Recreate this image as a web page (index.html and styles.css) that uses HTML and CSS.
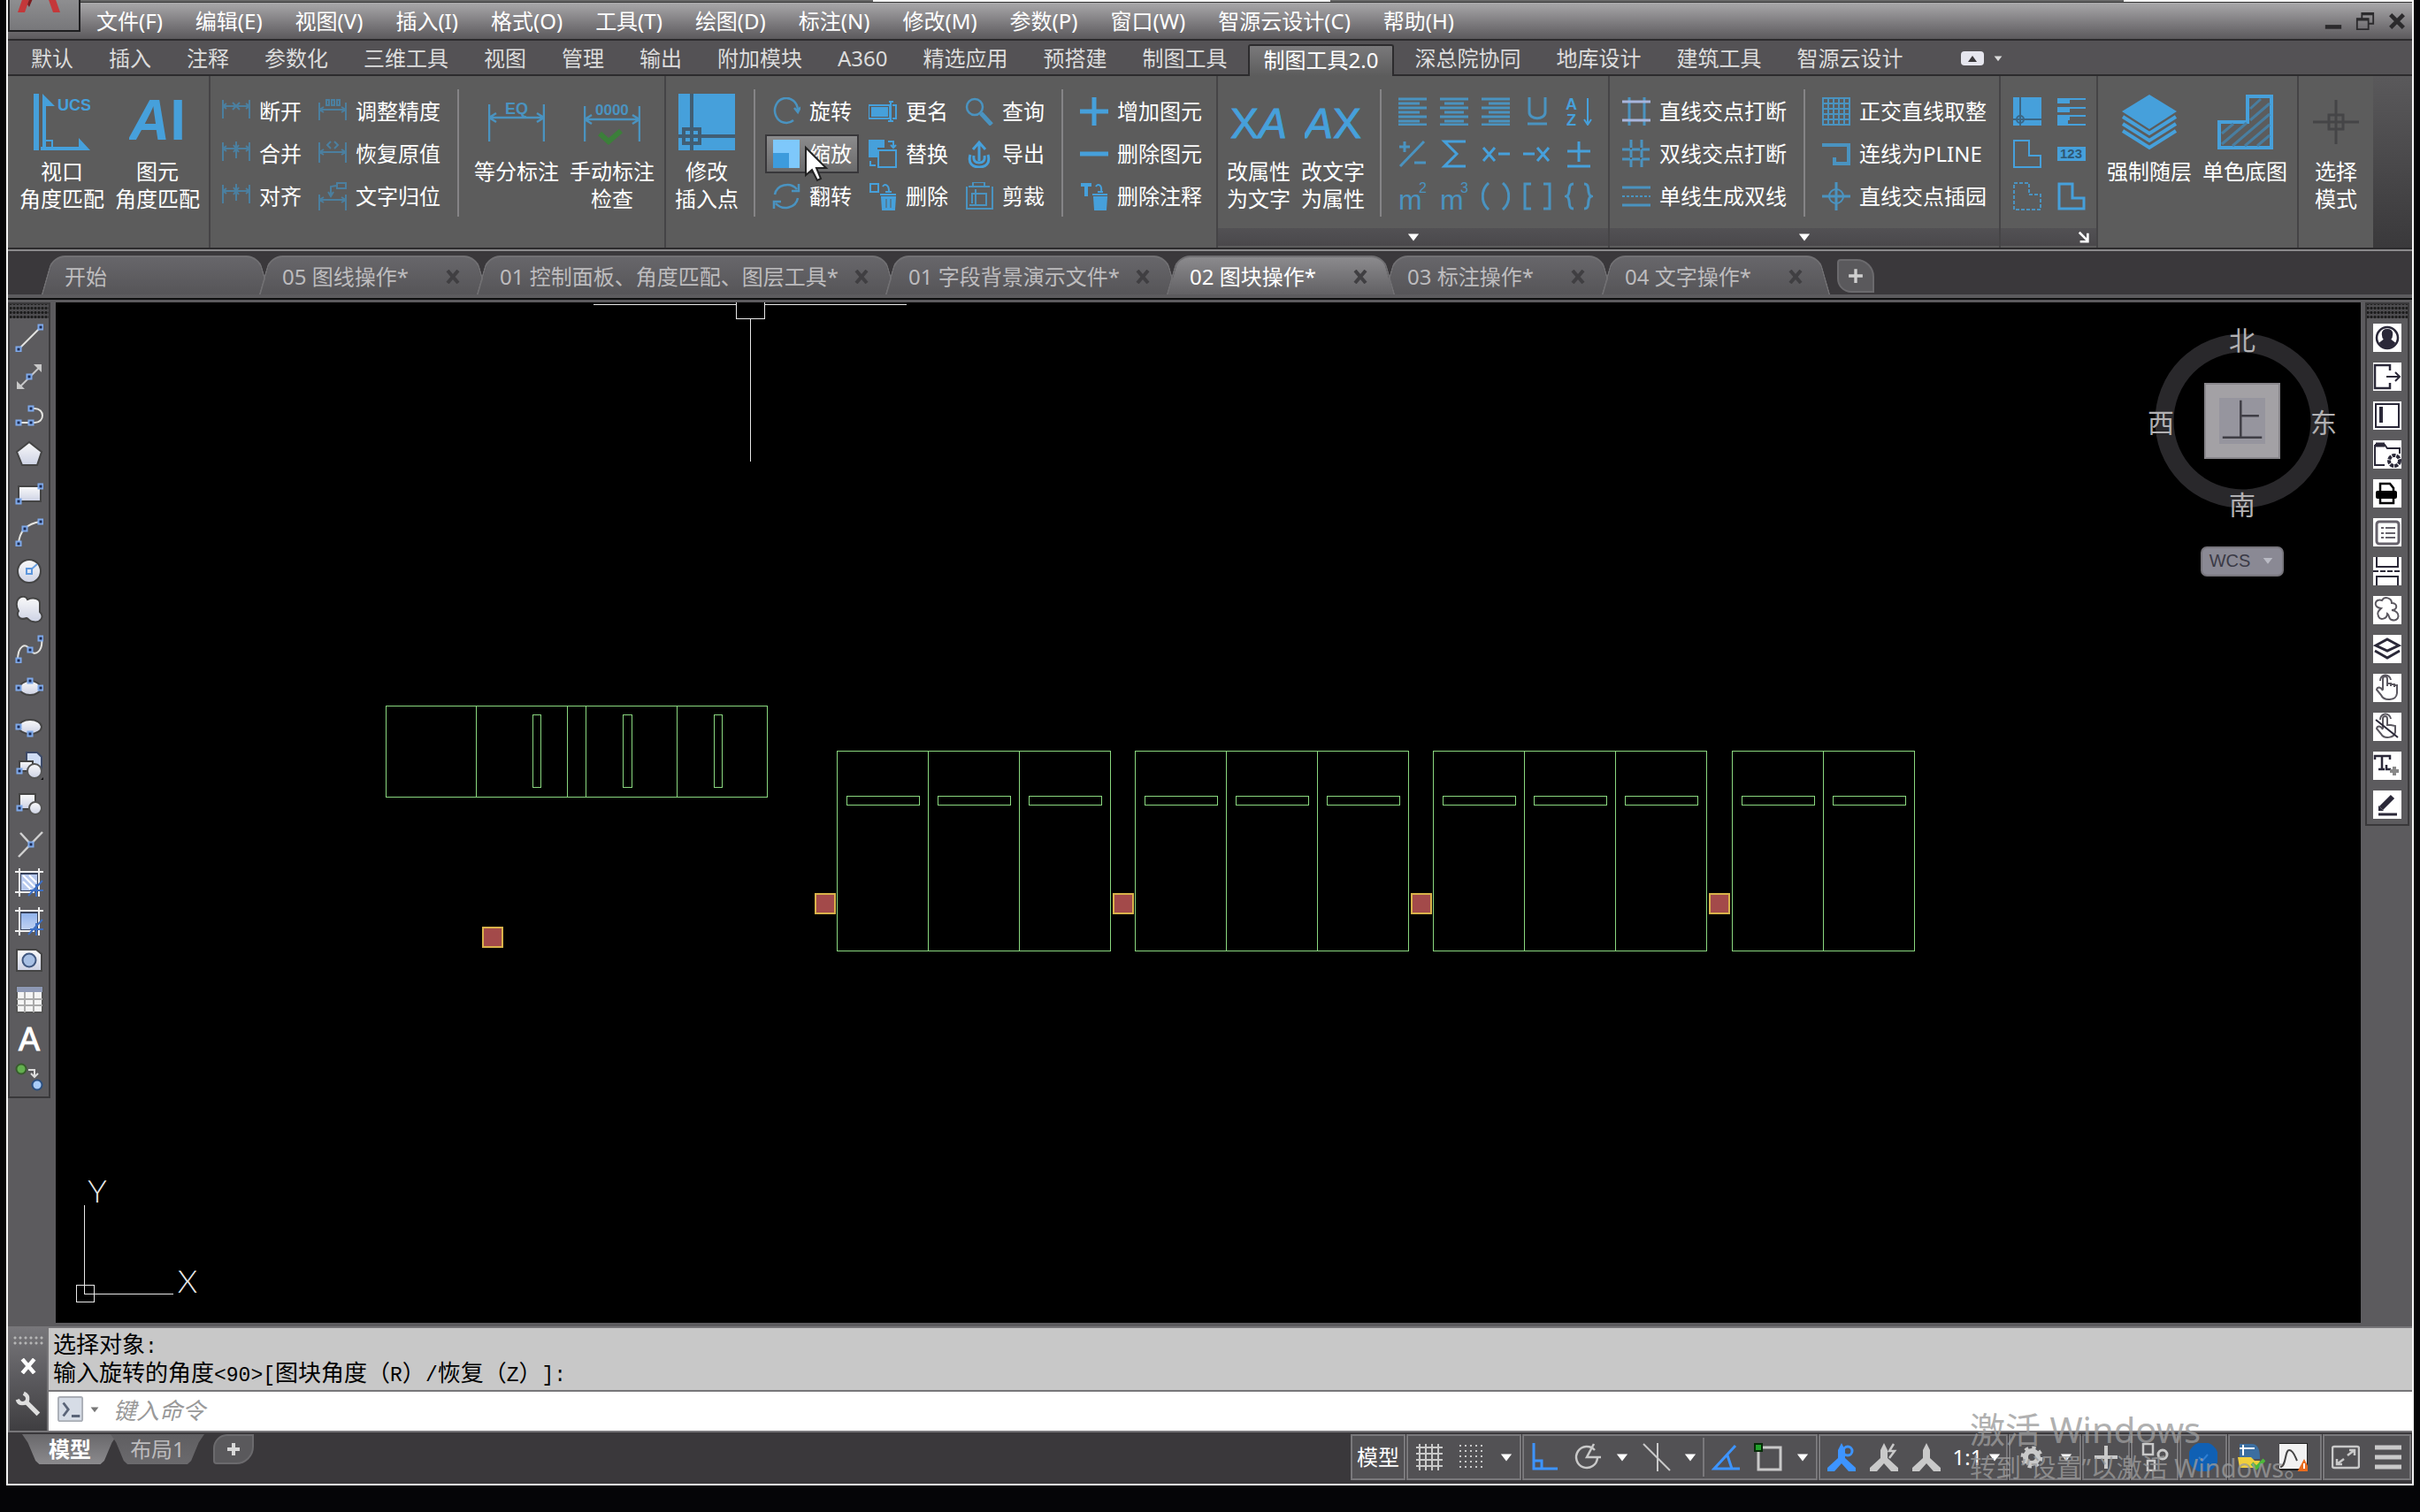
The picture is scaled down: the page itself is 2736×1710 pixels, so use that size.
FILE: index.html
```html
<!DOCTYPE html>
<html lang="zh-CN">
<head>
<meta charset="utf-8">
<title>02 图块操作</title>
<link rel="stylesheet" href="styles.css">
</head>
<body>
<svg class="defs" aria-hidden="true">
  <defs>
    <linearGradient id="gw" x1="0" y1="0" x2="0" y2="1"><stop offset="0" stop-color="#fafafa"/><stop offset="1" stop-color="#cdd2e4"/></linearGradient>
    <linearGradient id="gb" x1="0" y1="0" x2="0" y2="1"><stop offset="0" stop-color="#8fb2ec"/><stop offset="1" stop-color="#c3d3f2"/></linearGradient>
    <g id="grip"><rect x="-2.500" y="-2.500" width="5" height="5" fill="#1d2c55" stroke="#7fa9ea" stroke-width="2"/></g>
    <!-- dimension icons -->
    <symbol id="dim" viewBox="0 0 32 32"><path d="M1 3V24M31 3V24M1 10H31M5 7L1 10L5 13M27 7L31 10L27 13"/></symbol>
    <symbol id="dimx" viewBox="0 0 32 32"><use href="#dim"/><path d="M12 6L20 14M20 6L12 14"/></symbol>
    <symbol id="dimj" viewBox="0 0 32 32"><use href="#dim"/><path d="M16 2V21M13 6L16 10L13 14M19 6L16 10L19 14"/></symbol>
    <symbol id="dim0" viewBox="0 0 32 32"><path d="M1 6V26M31 6V26M1 14H31M6 11L1 14L6 17M26 11L31 14L26 17M9 3h3v6h-3zM15 3h3v6h-3zM21 3h3v6h-3z"/></symbol>
    <symbol id="dimr" viewBox="0 0 32 32"><path d="M1 3V26M31 3V26M1 14H31M6 11L1 14L6 17M26 11L31 14L26 17M14 2L10 6L14 10M18 2L22 6L18 10"/></symbol>
    <symbol id="dimt" viewBox="0 0 32 32"><path d="M1 14V32M31 14V32M1 20H31M6 17L1 20L6 23M26 17L31 20L26 23M21 1h10v6h-10zM20 4L14 5V14M11 11L14 16L17 11"/></symbol>
    <!-- block icons -->
    <symbol id="rot" viewBox="0 0 32 32"><path d="M24 26A13 14 0 1 1 29 15M25 12L29 17L32 11" stroke-width="2.500"/></symbol>
    <symbol id="scale" viewBox="0 0 32 32"><rect x="1" y="0" width="30" height="32" fill="#7ec8fb" stroke="none"/><rect x="1" y="15" width="18" height="17" fill="#3d9bdc" stroke="none"/></symbol>
    <symbol id="flip" viewBox="0 0 32 32"><path d="M3 14C5 3 20 -1 28 8M30 2V10H22M29 18C27 29 12 33 4 24M2 30V22H10" stroke-width="2.500"/></symbol>
    <symbol id="rename" viewBox="0 0 32 32"><path d="M0 9h24v15h-24zM23 5h5M25 5v22M22 27h6M27 9h4v15h-4"/><rect x="4" y="12" width="17" height="9" fill="currentColor"/></symbol>
    <symbol id="swap" viewBox="0 0 32 32"><path d="M1 1H17V8H9V19H1Z" fill="currentColor"/><path d="M11 12H31V31H11ZM22 2H28V9M2 24V29H8M25 6L28 9L31 6"/></symbol>
    <symbol id="del" viewBox="0 0 32 32"><path d="M2 2h9v9h-9zM16 5C18 1 23 3 23 10M13 14H31M19 11H26"/><path d="M15 17H30L29 31H16Z" fill="currentColor"/><path d="M20 19V29M25 19V29" stroke="#5c5c5c" stroke-width="1"/></symbol>
    <symbol id="deln" viewBox="0 0 32 32"><path d="M1 3H13M7 3V16" stroke-width="4"/><path d="M18 5C20 1 25 3 24 10M14 14H31M20 11H26"/><path d="M16 17H30L29 31H17Z" fill="currentColor"/></symbol>
    <symbol id="find" viewBox="0 0 32 32"><circle cx="11" cy="11" r="9" stroke-width="2.500"/><path d="M18 18L30 31" stroke-width="5"/></symbol>
    <symbol id="export" viewBox="0 0 32 32"><path d="M16 3V24M9 11L16 3L23 11M6 17C3 27 9 31 16 31S29 27 26 17M10 18C9 24 12 26 16 26S23 24 22 18" stroke-width="3"/></symbol>
    <symbol id="clip" viewBox="0 0 32 32"><path d="M4 5H28M2 5V30H31V5M9 5V0H22V5M8 24V13H24V26H5M12 8V26"/></symbol>
    <symbol id="plus" viewBox="0 0 32 32"><path d="M16 0V32M0 16H32" stroke-width="5"/></symbol>
    <symbol id="minus" viewBox="0 0 32 32"><path d="M0 16H32" stroke-width="5"/></symbol>
    <!-- text tools -->
    <symbol id="al" viewBox="0 0 32 32"><path d="M0 2H32M0 7H24M0 12H32M0 17H24M0 22H32M0 27H24M0 31H32" stroke-width="3"/></symbol>
    <symbol id="ac" viewBox="0 0 32 32"><path d="M0 2H32M5 7H27M0 12H32M5 17H27M0 22H32M5 27H27M0 31H32" stroke-width="3"/></symbol>
    <symbol id="ar" viewBox="0 0 32 32"><path d="M0 2H32M8 7H32M0 12H32M8 17H32M0 22H32M8 27H32M0 31H32" stroke-width="3"/></symbol>
    <symbol id="und" viewBox="0 0 32 32"><path d="M7 0V17C7 26 25 26 25 17V0M5 30H27" stroke-width="3"/></symbol>
    <symbol id="az" viewBox="0 0 32 32"><path d="M26 1V30M22 25L26 31L30 25"/><text x="1" y="14" class="t tb t18">A</text><text x="2" y="32" class="t tb t18">Z</text></symbol>
    <symbol id="pm" viewBox="0 0 32 32"><path d="M2 30L29 2M1 8H13M7 2V14M18 26H31" stroke-width="3"/></symbol>
    <symbol id="sum" viewBox="0 0 32 32"><path d="M29 2H5L19 16L5 30H29" stroke-width="3"/></symbol>
    <symbol id="xm" viewBox="0 0 32 32"><path d="M2 9L15 24M15 9L2 24M19 16H32" stroke-width="3"/></symbol>
    <symbol id="mx" viewBox="0 0 32 32"><path d="M16 9L29 24M29 9L16 24M0 16H13" stroke-width="3"/></symbol>
    <symbol id="pmm" viewBox="0 0 32 32"><path d="M16 2V25M3 13H29M3 30H29" stroke-width="3"/></symbol>
    <symbol id="m2" viewBox="0 0 32 32"><text x="0" y="31" class="t t26">m</text><text x="23" y="12" class="t t16">2</text></symbol>
    <symbol id="m3" viewBox="0 0 32 32"><text x="0" y="31" class="t t26">m</text><text x="23" y="12" class="t t16">3</text></symbol>
    <symbol id="p1" viewBox="0 0 32 32"><path d="M8 1C-1 9 -1 23 8 31M24 1C33 9 33 23 24 31" stroke-width="3"/></symbol>
    <symbol id="p2" viewBox="0 0 32 32"><path d="M9 2H2V30H9M23 2H30V30H23" stroke-width="3"/></symbol>
    <symbol id="p3" viewBox="0 0 32 32"><path d="M10 2C2 2 8 14 2 16C8 18 2 30 10 30M22 2C30 2 24 14 30 16C24 18 30 30 22 30" stroke-width="3"/></symbol>
    <!-- line tools -->
    <symbol id="c1" viewBox="0 0 32 32"><path d="M8 0V32M25 0V32" stroke-width="3"/><path d="M0 5H32M0 26H32" stroke="#a9b6dd" stroke-width="3"/></symbol>
    <symbol id="c2" viewBox="0 0 32 32"><path d="M10 0V32M22 0V32M0 11H32M0 22H32" stroke-dasharray="9 2" stroke-width="3"/></symbol>
    <symbol id="c3" viewBox="0 0 32 32"><path d="M0 6H32M0 26H32" stroke-width="3"/><path d="M0 16H32" stroke-dasharray="3 2"/></symbol>
    <symbol id="c4" viewBox="0 0 32 32"><path d="M1 1H31V31H1ZM7 1V31M13 1V31M19 1V31M25 1V31M1 7H31M1 13H31M1 19H31M1 25H31"/></symbol>
    <symbol id="c5" viewBox="0 0 32 32"><path d="M0 6H30V27H14V20" stroke-width="4"/></symbol>
    <symbol id="c6" viewBox="0 0 32 32"><circle cx="16" cy="16" r="8"/><path d="M16 0V32M0 16H32" stroke-width="3"/></symbol>
    <symbol id="d1" viewBox="0 0 32 32"><rect width="32" height="32" fill="#46a0db" stroke="none"/><path d="M8 0V32M0 25H32" stroke="#3c6684"/><circle cx="8" cy="25" r="4" stroke="#3c6684"/></symbol>
    <symbol id="d2" viewBox="0 0 32 32"><path d="M0 2H32M0 12H32M0 21H32M0 31H32"/><path d="M0 5H14M0 15H14M0 24H14M12 28H0" stroke-width="4"/></symbol>
    <symbol id="d3" viewBox="0 0 32 32"><path d="M1 1H18V18H31V31H1Z"/></symbol>
    <symbol id="d4" viewBox="0 0 32 32"><rect x="0" y="8" width="32" height="16" fill="#46a0db" stroke="none"/><text x="3" y="21" class="t tb t14 dark">123</text></symbol>
    <symbol id="d5" viewBox="0 0 32 32"><path d="M1 1H18V14H31V31H1Z" stroke-dasharray="4 2"/></symbol>
    <symbol id="d6" viewBox="0 0 32 32"><path d="M2 2H17V18H30V30H2Z" stroke-width="3"/></symbol>
    <!-- large ribbon icons -->
    <symbol id="ucs" viewBox="0 0 64 64"><path d="M3 0V64" stroke-width="6"/><path d="M12 64V8M8 62H60" stroke-width="4"/><path d="M10 0L24 14H10ZM51 50L64 64H51Z" fill="currentColor" stroke="none"/><path d="M14 53h7v8"/><text x="27" y="19" class="t tb t20">UCS</text></symbol>
    <symbol id="ai" viewBox="0 0 64 64"><text x="0" y="52" class="t tb t62"><tspan font-style="italic">A</tspan>I</text></symbol>
    <symbol id="eq" viewBox="0 0 64 64"><path d="M1 12V54M63 12V54M1 27H63M9 22L1 27L9 32M55 22L63 27L55 32" stroke-width="2.500"/><text x="19" y="23" class="t tb t18">EQ</text></symbol>
    <symbol id="chk" viewBox="0 0 64 64"><path d="M1 14V54M63 14V54M1 29H63M9 24L1 29L9 34M55 24L63 29L55 34" stroke-width="2.500"/><text x="13" y="24" class="t tb t17">0000</text><path d="M18 45L28 54L42 42" stroke="#3c7f3a" stroke-width="6"/></symbol>
    <symbol id="ins" viewBox="0 0 64 64"><rect width="64" height="64" fill="#46a0db" stroke="none"/><path d="M15 0V64M0 48H64" stroke="#415e74" stroke-width="4"/><rect x="6" y="40" width="18" height="16" stroke="#415e74" stroke-width="4"/></symbol>
    <symbol id="xa" viewBox="0 0 64 64"><text x="0" y="50" class="t t48">X<tspan font-style="italic">A</tspan></text></symbol>
    <symbol id="ax" viewBox="0 0 64 64"><text x="0" y="50" class="t t48"><tspan font-style="italic">A</tspan>X</text></symbol>
    <symbol id="layer" viewBox="0 0 64 64"><path d="M32 1L63 20L32 40L1 20Z" fill="#46a0db" stroke="none"/><path d="M2 26L32 45L62 26M2 34L32 53L62 34M2 42L32 61L62 42" stroke-width="4"/></symbol>
    <symbol id="mono" viewBox="0 0 64 64"><path d="M35 3H62V61H3V32H35Z" stroke-width="4"/><path d="M6 45L19 34M6 57L34 33M18 59L60 23M32 59L60 35M46 59L60 47M38 30L60 11M38 17L50 6" stroke="#497ea0" stroke-width="3"/></symbol>
    <symbol id="sel" viewBox="0 0 64 64"><path d="M32 7V26M32 38V57M6 32H25M39 32H58M24 24H40V40H24ZM32 24V40M24 32H40" stroke="#454547" stroke-width="3"/></symbol>
    <!-- drawing toolbar -->
    <symbol id="l1" viewBox="0 0 32 32"><path d="M4 29L29 4" stroke="#e4e4e0"/><use href="#grip" x="4" y="29"/><use href="#grip" x="29" y="4"/></symbol>
    <symbol id="l2" viewBox="0 0 32 32"><path d="M6 27L27 6" stroke="#c8c8c8"/><path d="M21 2H30V11ZM2 21V30H11Z" fill="#c8c8c8" stroke="none"/><use href="#grip" x="16" y="16"/></symbol>
    <symbol id="l3" viewBox="0 0 32 32"><path d="M4 24H22C34 24 34 8 22 8H17" stroke="#e4e4e0"/><use href="#grip" x="4" y="24"/><use href="#grip" x="18" y="24"/><use href="#grip" x="18" y="8"/></symbol>
    <symbol id="l4" viewBox="0 0 32 32"><path d="M16 2L30 13L25 28H8L2 13Z" fill="url(#gw)" stroke="#444"/></symbol>
    <symbol id="l5" viewBox="0 0 32 32"><rect x="4" y="8" width="25" height="17" fill="url(#gw)" stroke="#444"/><use href="#grip" x="4" y="25"/><use href="#grip" x="29" y="8"/></symbol>
    <symbol id="l6" viewBox="0 0 32 32"><path d="M4 29C5 14 14 6 29 4" stroke="#e4e4e0"/><use href="#grip" x="4" y="29"/><use href="#grip" x="11" y="12"/><use href="#grip" x="29" y="4"/></symbol>
    <symbol id="l7" viewBox="0 0 32 32"><circle cx="16" cy="16" r="13" fill="url(#gw)" stroke="#444"/><path d="M16 16L25 8" stroke="#6aa0e0"/><rect x="13" y="13" width="6" height="6" fill="#dfe6f5" stroke="#5d97dd"/></symbol>
    <symbol id="l8" viewBox="0 0 32 32"><path d="M4 3C8 -1 13 1 14 4C21 1 28 3 28 8V18C34 24 28 31 20 29C16 29 16 26 13 25C5 28 1 22 4 17C1 12 1 6 4 3Z" fill="url(#gw)" stroke="#444"/></symbol>
    <symbol id="l9" viewBox="0 0 32 32"><path d="M3 29C3 12 12 8 17 17C22 26 32 18 30 4" stroke="#e4e4e0"/><use href="#grip" x="4" y="29"/><use href="#grip" x="17" y="17"/><use href="#grip" x="29" y="4"/></symbol>
    <symbol id="l10" viewBox="0 0 32 32"><ellipse cx="17" cy="16" rx="12" ry="8" fill="url(#gw)" stroke="#444"/><use href="#grip" x="4" y="16"/><use href="#grip" x="17" y="8"/><use href="#grip" x="29" y="16"/></symbol>
    <symbol id="l11" viewBox="0 0 32 32"><ellipse cx="17" cy="16" rx="13" ry="8" fill="url(#gw)" stroke="#444"/><use href="#grip" x="4" y="16"/><use href="#grip" x="17" y="24"/></symbol>
    <symbol id="l12" viewBox="0 0 32 32"><path d="M13 1H25L30 6V20H13Z" fill="#cfdcf5" stroke="#3d4a68"/><rect x="5" y="11" width="15" height="11" fill="url(#gw)" stroke="#444"/><circle cx="22" cy="22" r="8" fill="url(#gw)" stroke="#555"/><use href="#grip" x="5" y="22"/><path d="M33 28V32H29Z" fill="#111" stroke="none"/></symbol>
    <symbol id="l13" viewBox="0 0 32 32"><rect x="5" y="4" width="18" height="17" fill="url(#gw)" stroke="#444"/><circle cx="23" cy="20" r="7" fill="url(#gw)" stroke="#555"/><use href="#grip" x="5" y="20"/></symbol>
    <symbol id="l14" viewBox="0 0 32 32"><path d="M4 31L31 3M6 4L17 16" stroke="#d0d0d0" stroke-width="2.500"/><use href="#grip" x="18" y="17"/></symbol>
    <symbol id="l15" viewBox="0 0 32 32"><rect x="6" y="6" width="20" height="20" fill="#b7c9ee" stroke="#38435c"/><path d="M9 8L24 23M16 8L24 16M9 15L19 25" stroke="#fff"/><path d="M5 0V32M27 0V32M0 4H32M0 27H22" stroke="#f0f0f0"/><path d="M24 18V32M17 25H32M15 31L31 14" stroke="#3d6fc4"/></symbol>
    <symbol id="l16" viewBox="0 0 32 32"><rect x="6" y="6" width="20" height="20" fill="url(#gb)" stroke="#38435c"/><path d="M5 0V32M27 0V32M0 4H32M0 27H22" stroke="#f0f0f0"/><path d="M24 18V32M17 25H32M15 31L31 14" stroke="#3d6fc4"/></symbol>
    <symbol id="l17" viewBox="0 0 32 32"><path d="M2 4H24L30 9V28H2Z" fill="url(#gw)" stroke="#444"/><circle cx="16" cy="16" r="7.500" fill="#a8c0e4" stroke="#415880"/></symbol>
    <symbol id="l18" viewBox="0 0 32 32"><rect x="2" y="2" width="29" height="29" fill="#f4f4f4" stroke="#555"/><rect x="2" y="2" width="29" height="6" fill="#8d98b4" stroke="none"/><path d="M11 8V31M21 8V31M2 16H31M2 23H31" stroke="#aaa"/></symbol>
    <symbol id="l19" viewBox="0 0 32 32"><text x="4" y="30" class="t t34 white">A</text></symbol>
    <symbol id="l20" viewBox="0 0 32 32"><circle cx="7" cy="7" r="5.500" fill="#63b04f" stroke="#375c2c"/><circle cx="25" cy="25" r="5.500" fill="#a9cdfa" stroke="#2b4f80"/><path d="M15 8H22V15M18 12L22 16L26 12" stroke="#ddd"/></symbol>
    <!-- utility toolbar -->
    <symbol id="r1" viewBox="0 0 32 32"><ellipse cx="16" cy="16" rx="12" ry="12" stroke-width="2.500"/><path d="M16 7C24 7 21 16 19 18L24 22C20 28 12 28 8 22L13 18C11 16 8 7 16 7Z" fill="currentColor"/></symbol>
    <symbol id="r2" viewBox="0 0 32 32"><path d="M19 9V3H2V29H19V23" stroke-width="2.500"/><path d="M15 16H30M25 11L30 16L25 21"/></symbol>
    <symbol id="r3" viewBox="0 0 32 32"><rect x="3" y="3" width="26" height="26"/><path d="M9 6V24" stroke-width="4"/></symbol>
    <symbol id="r4" viewBox="0 0 32 32"><path d="M2 5H13L16 9H30V15M2 5V28H13"/><path d="M3 5H13" stroke-width="5"/><circle cx="24" cy="23" r="6" stroke-width="4" stroke-dasharray="4 1"/></symbol>
    <symbol id="r5" viewBox="0 0 32 32"><path d="M8 14V5H19L23 10V14M8 22V27H23V22" stroke="#000" stroke-width="2.500"/><rect x="3" y="13" width="24" height="9" rx="2" fill="#000" stroke="none"/></symbol>
    <symbol id="r6" viewBox="0 0 32 32"><rect x="4" y="4" width="25" height="25" rx="3" stroke="#67626c" stroke-width="3"/><path d="M9 11H12M14 11H25M9 17H12M14 17H25M9 22H12M14 22H25" stroke="#67626c"/></symbol>
    <symbol id="r7" viewBox="0 0 32 32"><path d="M4 0V11H28V0M4 32V22H28V32"/><path d="M0 16H32" stroke-dasharray="6 2"/></symbol>
    <symbol id="r8" viewBox="0 0 32 32"><path d="M9 14C-1 13 2 2 10 5C13 0 21 2 21 8C28 8 28 16 21 16C32 17 30 30 21 27C17 26 19 22 16 20C16 26 8 28 6 23C4 19 6 17 9 14Z" stroke="#5b5860"/></symbol>
    <symbol id="r9" viewBox="0 0 32 32"><path d="M16 5L29 12L16 18L3 12ZM2 18L16 26L30 18" stroke-width="3"/></symbol>
    <symbol id="r10" viewBox="0 0 32 32"><path d="M11 18V6C11 2 16 2 16 6V14M16 11H20V14M20 12H24V15M24 13H27V22C26 31 12 31 9 24L4 18C5 14 9 15 11 19M8 8A6 6 0 1 1 20 7" stroke="#5b5860"/></symbol>
    <symbol id="r11" viewBox="0 0 32 32"><path d="M11 18V7C11 3 16 3 16 7V14H20L25 15V22C24 29 12 30 9 24L4 18C5 14 9 15 11 19M8 8A6 6 0 1 1 20 7" stroke="#5b5860"/><path d="M3 8L28 28"/></symbol>
    <symbol id="r12" viewBox="0 0 32 32"><path d="M2 9V5H19V9M10 5V20M6 20H13M15 15V20H20" stroke-width="2.500"/><path d="M24 17V27M19 22H29" stroke="#888" stroke-width="4"/></symbol>
    <symbol id="r13" viewBox="0 0 32 32"><path d="M6 27H27" stroke-width="3"/><path d="M9 20L22 7" stroke-width="6"/><path d="M6 17L12 23L6 23Z" fill="currentColor" stroke="none"/></symbol>
    <!-- status bar -->
    <symbol id="s1" viewBox="0 0 32 32"><path d="M5 1V31M12 1V31M19 1V31M26 1V31M1 5H31M1 12H31M1 19H31M1 26H31"/></symbol>
    <symbol id="s2" viewBox="0 0 32 32"><path d="M2 3H31M2 9H31M2 15H31M2 21H31M2 27H31" stroke-dasharray="2 4"/></symbol>
    <symbol id="s3" viewBox="0 0 32 32"><path d="M3 0V29H30M3 20H12V29" stroke="#3d94ff" stroke-width="3"/></symbol>
    <symbol id="s4" viewBox="0 0 32 32"><path d="M24 8A12 12 0 1 0 27 17M31 16H15L23 1" stroke-width="2.500"/></symbol>
    <symbol id="s5" viewBox="0 0 32 32"><path d="M1 1L31 31M17 0V32" stroke-width="2"/></symbol>
    <symbol id="s6" viewBox="0 0 32 32"><path d="M27 3L3 29H32M18 14L23 29" stroke="#3d94ff" stroke-width="3"/></symbol>
    <symbol id="s7" viewBox="0 0 32 32"><rect x="5" y="5" width="25" height="25" stroke-width="3"/><rect x="1" y="1" width="8" height="8" fill="#22a32c" stroke="#062c08"/></symbol>
    <symbol id="s8" viewBox="0 0 32 32"><path d="M16 0L20 8V17L32 28V32H24L16 23L8 32H0V28L12 17V8Z" fill="currentColor" stroke="none"/></symbol>
    <symbol id="s8b" viewBox="0 0 32 32"><use href="#s8" color="#3d94ff"/><circle cx="23" cy="9" r="5" stroke="#3d94ff" stroke-width="3"/></symbol>
    <symbol id="s8c" viewBox="0 0 32 32"><use href="#s8"/><path d="M27 1L22 9H28L22 17" stroke-width="2.500"/></symbol>
    <symbol id="gear" viewBox="0 0 32 32"><circle cx="16" cy="16" r="7" stroke-width="6"/><circle cx="16" cy="16" r="10" stroke-width="5" stroke-dasharray="4 3.854"/></symbol>
    <symbol id="splus" viewBox="0 0 32 32"><path d="M16 3V29M3 16H29" stroke-width="4"/></symbol>
    <symbol id="sobj" viewBox="0 0 32 32"><path d="M3 1H14V13H3ZM8 20V31H16V20Z" stroke-width="2.500"/><circle cx="25" cy="13" r="5" stroke-width="3"/></symbol>
    <symbol id="sok" viewBox="0 0 32 32"><circle cx="16" cy="16" r="17" fill="#1060b4" stroke="none"/><path d="M11 16L15 20L21 13" stroke="#2f7fd4"/></symbol>
    <symbol id="spr" viewBox="0 0 32 32"><path d="M3 1H17C23 1 26 6 26 18H3Z" fill="#3c6ea0" stroke="none"/><path d="M1 16H16L20 20H26L24 28H3Z" fill="#f0cf3d" stroke="none"/><path d="M3 6H20M7 2V14" stroke="#fff"/><path d="M17 23L22 28L31 19" stroke="#4cb83a" stroke-width="4"/></symbol>
    <symbol id="sgr" viewBox="0 0 32 32"><rect x="-2" y="0" width="34" height="30" fill="#f2f2f2" stroke="#222"/><path d="M1 27C8 27 6 8 11 8S18 16 20 20" stroke="#444"/><path d="M28 18L36 33H20Z" fill="#e86b1e" stroke="none"/><path d="M28 23V29" stroke="#fff"/></symbol>
    <symbol id="sfull" viewBox="0 0 32 32"><rect x="1" y="4" width="30" height="24" rx="2" stroke-width="2.500"/><path d="M18 14L26 8M20 8H26V14M14 18L6 24M6 18V24H12" stroke-width="2.500"/></symbol>
    <symbol id="smenu" viewBox="0 0 32 32"><path d="M1 5H31M1 16H31M1 27H31" stroke-width="5"/></symbol>
    <symbol id="down" viewBox="0 0 16 16"><path d="M1 4H15L8 13Z" fill="currentColor" stroke="none"/></symbol>
    <symbol id="x" viewBox="0 0 16 16"><path d="M2 1L14 15M14 1L2 15" stroke-width="4"/></symbol>
  </defs>
</svg>

<div class="window">
  <div class="edge"></div>
  <header class="menubar">
    <button class="logo" aria-label="应用程序"><svg viewBox="0 0 48 14"><path d="M0 14L7 -6H15L8 14ZM33 -6H41L48 14H40Z" fill="#c4383a"/><path d="M15 -6L11 5L13 8L19 -6Z" fill="#7d1c1f"/></svg></button>
    <nav class="menus">
      <button>文件(F)</button><button>编辑(E)</button><button>视图(V)</button><button>插入(I)</button><button>格式(O)</button><button>工具(T)</button><button>绘图(D)</button><button>标注(N)</button><button>修改(M)</button><button>参数(P)</button><button>窗口(W)</button><button>智源云设计(C)</button><button>帮助(H)</button>
    </nav>
    <div class="wincontrols">
      <button aria-label="最小化"><svg viewBox="0 0 24 24"><path d="M2 19H22" stroke-width="5"/></svg></button>
      <button aria-label="还原"><svg viewBox="0 0 24 24"><path d="M8 8V2H22V15H16M2 9H16V22H2Z" stroke-width="2"/><path d="M8 3H22M2 10H16" stroke-width="3"/></svg></button>
      <button aria-label="关闭"><svg viewBox="0 0 24 24"><path d="M4 4L20 20M20 4L4 20" stroke-width="5"/></svg></button>
    </div>
  </header>

  <nav class="rtabs">
    <button>默认</button><button>插入</button><button>注释</button><button>参数化</button><button>三维工具</button><button>视图</button><button>管理</button><button>输出</button><button>附加模块</button><button>A360</button><button>精选应用</button><button>预搭建</button><button>制图工具</button><button class="on">制图工具2.0</button><button>深总院协同</button><button>地库设计</button><button>建筑工具</button><button>智源云设计</button>
    <button class="collapse" aria-label="最小化功能区"><svg class="pill" viewBox="0 0 26 16"><rect width="26" height="16" rx="4" fill="#e6e6ee"/><path d="M8 12L13 5L18 12Z" fill="#3a383b"/></svg><svg class="tri"><use href="#down"/></svg></button>
  </nav>

  <section class="ribbon">
    <div class="panel pa"><div class="tools">
      <button class="big"><svg><use href="#ucs"/></svg><span>视口<br>角度匹配</span></button>
      <button class="big"><svg><use href="#ai"/></svg><span>图元<br>角度匹配</span></button>
    </div></div>
    <div class="panel pb"><div class="tools">
      <div class="stack">
        <button><svg class="dim"><use href="#dimx"/></svg>断开</button>
        <button><svg class="dim"><use href="#dimj"/></svg>合并</button>
        <button><svg class="dim"><use href="#dimj"/></svg>对齐</button>
      </div>
      <div class="stack">
        <button><svg class="dim"><use href="#dim0"/></svg>调整精度</button>
        <button><svg class="dim"><use href="#dimr"/></svg>恢复原值</button>
        <button><svg class="dim"><use href="#dimt"/></svg>文字归位</button>
      </div>
      <i class="sep"></i>
      <button class="big"><svg class="mid"><use href="#eq"/></svg><span>等分标注</span></button>
      <button class="big"><svg class="mid"><use href="#chk"/></svg><span>手动标注<br>检查</span></button>
    </div></div>
    <div class="panel pc"><div class="tools">
      <button class="big narrow"><svg><use href="#ins"/></svg><span>修改<br>插入点</span></button>
      <i class="sep"></i>
      <div class="stack">
        <button><svg class="mid"><use href="#rot"/></svg>旋转</button>
        <button class="hot"><svg><use href="#scale"/></svg>缩放</button>
        <button><svg class="mid"><use href="#flip"/></svg>翻转</button>
      </div>
      <div class="stack">
        <button><svg><use href="#rename"/></svg>更名</button>
        <button><svg><use href="#swap"/></svg>替换</button>
        <button><svg><use href="#del"/></svg>删除</button>
      </div>
      <div class="stack">
        <button><svg class="mid"><use href="#find"/></svg>查询</button>
        <button><svg><use href="#export"/></svg>导出</button>
        <button><svg class="mid"><use href="#clip"/></svg>剪裁</button>
      </div>
      <i class="sep"></i>
      <div class="stack">
        <button><svg><use href="#plus"/></svg>增加图元</button>
        <button><svg><use href="#minus"/></svg>删除图元</button>
        <button><svg><use href="#deln"/></svg>删除注释</button>
      </div>
    </div></div>
    <div class="panel pd"><div class="tools">
      <button class="big narrow"><svg><use href="#xa"/></svg><span>改属性<br>为文字</span></button>
      <button class="big narrow"><svg><use href="#ax"/></svg><span>改文字<br>为属性</span></button>
      <i class="sep"></i>
      <div class="icons five">
        <button aria-label="左对齐"><svg class="mid"><use href="#al"/></svg></button><button aria-label="居中"><svg class="mid"><use href="#ac"/></svg></button><button aria-label="右对齐"><svg class="mid"><use href="#ar"/></svg></button><button aria-label="下划线"><svg class="mid"><use href="#und"/></svg></button><button aria-label="排序"><svg><use href="#az"/></svg></button>
        <button aria-label="加减"><svg class="mid"><use href="#pm"/></svg></button><button aria-label="求和"><svg><use href="#sum"/></svg></button><button aria-label="后缀"><svg><use href="#xm"/></svg></button><button aria-label="前缀"><svg><use href="#mx"/></svg></button><button aria-label="正负"><svg><use href="#pmm"/></svg></button>
        <button aria-label="平方米"><svg class="mid"><use href="#m2"/></svg></button><button aria-label="立方米"><svg class="mid"><use href="#m3"/></svg></button><button aria-label="圆括号"><svg class="mid"><use href="#p1"/></svg></button><button aria-label="方括号"><svg class="mid"><use href="#p2"/></svg></button><button aria-label="花括号"><svg class="mid"><use href="#p3"/></svg></button>
      </div>
    </div><button class="foot" aria-label="展开"><svg><use href="#down"/></svg></button></div>
    <div class="panel pe"><div class="tools">
      <div class="stack">
        <button><svg class="mid"><use href="#c1"/></svg>直线交点打断</button>
        <button><svg class="mid"><use href="#c2"/></svg>双线交点打断</button>
        <button><svg class="mid"><use href="#c3"/></svg>单线生成双线</button>
      </div>
      <i class="sep"></i>
      <div class="stack">
        <button><svg class="mid"><use href="#c4"/></svg>正交直线取整</button>
        <button><svg class="mid"><use href="#c5"/></svg>连线为PLINE</button>
        <button><svg class="mid"><use href="#c6"/></svg>直线交点插园</button>
      </div>
    </div><button class="foot" aria-label="展开"><svg><use href="#down"/></svg></button></div>
    <div class="panel pf"><div class="tools">
      <div class="icons two">
        <button aria-label="图块填充"><svg><use href="#d1"/></svg></button><button aria-label="图层表"><svg><use href="#d2"/></svg></button>
        <button aria-label="轮廓"><svg><use href="#d3"/></svg></button><button aria-label="编号"><svg><use href="#d4"/></svg></button>
        <button aria-label="虚线轮廓"><svg class="mid"><use href="#d5"/></svg></button><button aria-label="粗轮廓"><svg><use href="#d6"/></svg></button>
      </div>
    </div><button class="foot end" aria-label="设置"><svg viewBox="0 0 16 16"><path d="M2 2L13 13M13 3V14H3" stroke-width="3"/></svg></button></div>
    <div class="panel pg"><div class="tools">
      <button class="big"><svg><use href="#layer"/></svg><span>强制随层</span></button>
      <button class="big"><svg><use href="#mono"/></svg><span>单色底图</span></button>
    </div></div>
    <div class="panel ph"><div class="tools">
      <button class="big narrow"><svg><use href="#sel"/></svg><span>选择<br>模式</span></button>
    </div></div>
    <div class="rest"></div>
  </section>

  <nav class="files">
    <div class="ftab"><a href="#">开始</a></div>
    <div class="ftab"><a href="#">05 图线操作*</a><button aria-label="关闭"><svg><use href="#x"/></svg></button></div>
    <div class="ftab long"><a href="#">01 控制面板、角度匹配、图层工具*</a><button aria-label="关闭"><svg><use href="#x"/></svg></button></div>
    <div class="ftab wide"><a href="#">01 字段背景演示文件*</a><button aria-label="关闭"><svg><use href="#x"/></svg></button></div>
    <div class="ftab on"><a href="#">02 图块操作*</a><button aria-label="关闭"><svg><use href="#x"/></svg></button></div>
    <div class="ftab"><a href="#">03 标注操作*</a><button aria-label="关闭"><svg><use href="#x"/></svg></button></div>
    <div class="ftab"><a href="#">04 文字操作*</a><button aria-label="关闭"><svg><use href="#x"/></svg></button></div>
    <button class="add" aria-label="新建"><svg viewBox="0 0 16 16"><path d="M8 1V15M1 8H15" stroke-width="3"/></svg></button>
  </nav>

  <main class="work">
    <aside class="bar left">
      <i class="dots"></i>
      <button aria-label="直线"><svg><use href="#l1"/></svg></button><button aria-label="构造线"><svg><use href="#l2"/></svg></button><button aria-label="多段线"><svg><use href="#l3"/></svg></button><button aria-label="多边形"><svg><use href="#l4"/></svg></button><button aria-label="矩形"><svg><use href="#l5"/></svg></button><button aria-label="圆弧"><svg><use href="#l6"/></svg></button><button aria-label="圆"><svg><use href="#l7"/></svg></button><button aria-label="修订云线"><svg><use href="#l8"/></svg></button><button aria-label="样条曲线"><svg><use href="#l9"/></svg></button><button aria-label="椭圆"><svg><use href="#l10"/></svg></button><button aria-label="椭圆弧"><svg><use href="#l11"/></svg></button><button aria-label="插入块"><svg><use href="#l12"/></svg></button><button aria-label="创建块"><svg><use href="#l13"/></svg></button><button aria-label="点"><svg><use href="#l14"/></svg></button><button aria-label="图案填充"><svg><use href="#l15"/></svg></button><button aria-label="渐变色"><svg><use href="#l16"/></svg></button><button aria-label="面域"><svg><use href="#l17"/></svg></button><button aria-label="表格"><svg><use href="#l18"/></svg></button><button aria-label="多行文字"><svg><use href="#l19"/></svg></button><button aria-label="添加选定对象"><svg><use href="#l20"/></svg></button>
    </aside>
    <div class="canvas">
      <svg class="drawing" width="2200" height="800" viewBox="0 0 2200 800" shape-rendering="crispEdges">
        <defs>
          <g id="bay"><path d="M0 0H103V226H0ZM11 51H93V61H11Z"/></g>
          <g id="pin"><rect width="22" height="22"/></g>
        </defs>
        <g class="green">
          <path d="M373 456H804V559H373ZM475 456V559M578 456V559M599 456V559M702 456V559M539 466H548V548H539ZM641 466H651V548H641ZM744 466H753V548H744Z"/>
          <use href="#bay" x="883" y="507"/><use href="#bay" x="986" y="507"/><use href="#bay" x="1089" y="507"/>
          <use href="#bay" x="1220" y="507"/><use href="#bay" x="1323" y="507"/><use href="#bay" x="1426" y="507"/>
          <use href="#bay" x="1557" y="507"/><use href="#bay" x="1660" y="507"/><use href="#bay" x="1763" y="507"/>
          <use href="#bay" x="1895" y="507"/><use href="#bay" x="1998" y="507"/>
        </g>
        <g class="pins"><use href="#pin" x="859" y="669"/><use href="#pin" x="1196" y="669"/><use href="#pin" x="1533" y="669"/><use href="#pin" x="1870" y="669"/><use href="#pin" x="483" y="707"/></g>
        <path class="cross" d="M608 2H769M801 2H962M769 0V18H801V0M785 18V180"/>
      </svg>
      <svg class="axes" width="160" height="160" viewBox="0 0 160 160"><path d="M22 31V131H123M13 121H33V140H13Z" shape-rendering="crispEdges"/><text x="37" y="28">Y</text><text x="139" y="130">X</text></svg>
      <div class="compass">
        <svg width="216" height="220" viewBox="0 0 216 220"><circle cx="108" cy="110" r="88" fill="none" stroke="#29282b" stroke-width="21"/><rect x="66" y="68" width="84" height="84" fill="#a3a1a5" stroke="#88868b"/><rect x="82" y="84" width="52" height="52" fill="#96959e" stroke="none"/><text class="top" x="108" y="128">上</text><text x="108" y="30">北</text><text x="108" y="216">南</text><text x="16" y="123">西</text><text x="200" y="123">东</text></svg>
        <button class="wcs">WCS<svg><use href="#down"/></svg></button>
      </div>
    </div>
    <aside class="bar right">
      <i class="dots"></i>
      <button aria-label="用户"><svg><use href="#r1"/></svg></button><button aria-label="退出"><svg><use href="#r2"/></svg></button><button aria-label="面板"><svg><use href="#r3"/></svg></button><button aria-label="文件设置"><svg><use href="#r4"/></svg></button><button aria-label="打印"><svg><use href="#r5"/></svg></button><button aria-label="列表"><svg><use href="#r6"/></svg></button><button aria-label="打断"><svg><use href="#r7"/></svg></button><button aria-label="云线"><svg><use href="#r8"/></svg></button><button aria-label="图层"><svg><use href="#r9"/></svg></button><button aria-label="拾取"><svg><use href="#r10"/></svg></button><button aria-label="取消拾取"><svg><use href="#r11"/></svg></button><button aria-label="文字"><svg><use href="#r12"/></svg></button><button aria-label="编辑"><svg><use href="#r13"/></svg></button>
    </aside>
  </main>

  <section class="command">
    <div class="gutter">
      <i class="dots"></i>
      <button aria-label="关闭"><svg class="gx"><use href="#x"/></svg></button>
      <button aria-label="自定义"><svg class="wr" viewBox="0 0 32 32"><path d="M12 12L29 29" stroke-width="6"/><path d="M10 2C18 6 16 15 8 15C5 15 3 13 2 10" stroke-width="5"/></svg></button>
    </div>
    <div class="console">
      <div class="history"><p>选择对象<span>:</span></p><p>输入旋转的角度<span>&lt;90&gt;[</span>图块角度（<span>R</span>）<span>/</span>恢复（<span>Z</span>）<span>]:</span></p></div>
      <div class="entry">
        <button aria-label="最近使用的命令"><svg class="pr" viewBox="0 0 32 32"><rect x="1" y="1" width="29" height="29" rx="2" fill="#d6dce6" stroke="#a9adb5"/><path d="M7 8L13 16L7 24M17 24H27" stroke="#5a6478" stroke-width="3"/></svg><svg class="tri"><use href="#down"/></svg></button>
        <input type="text" aria-label="命令" placeholder="键入命令">
      </div>
    </div>
  </section>

  <footer class="status">
    <div class="layouts"><button class="on">模型</button><button>布局1</button><button class="add" aria-label="新建布局"><svg viewBox="0 0 16 16"><path d="M8 1V15M1 8H15" stroke-width="4"/></svg></button></div>
    <div class="group"><button class="model">模型</button></div>
    <div class="group"><button aria-label="栅格"><svg><use href="#s1"/></svg></button><button aria-label="捕捉"><svg><use href="#s2"/></svg></button><button class="arr" aria-label="捕捉选项"><svg><use href="#down"/></svg></button></div>
    <div class="group"><button aria-label="正交"><svg><use href="#s3"/></svg></button><button aria-label="极轴"><svg><use href="#s4"/></svg></button><button class="arr" aria-label="极轴选项"><svg><use href="#down"/></svg></button><button aria-label="等轴测"><svg><use href="#s5"/></svg></button><button class="arr line" aria-label="等轴测选项"><svg><use href="#down"/></svg></button><button aria-label="对象捕捉追踪"><svg><use href="#s6"/></svg></button><button aria-label="对象捕捉"><svg><use href="#s7"/></svg></button><button class="arr" aria-label="对象捕捉选项"><svg><use href="#down"/></svg></button></div>
    <div class="group"><button aria-label="注释可见性"><svg><use href="#s8b"/></svg></button><button aria-label="自动缩放"><svg><use href="#s8c"/></svg></button><button aria-label="注释比例"><svg><use href="#s8"/></svg></button><button class="ratio">1:1<svg><use href="#down"/></svg></button></div>
    <div class="group"><button aria-label="工作空间"><svg><use href="#gear"/></svg></button><button class="arr" aria-label="工作空间选项"><svg><use href="#down"/></svg></button></div>
    <div class="group"><button aria-label="注释监视器"><svg><use href="#splus"/></svg></button></div>
    <div class="group"><button aria-label="隔离对象"><svg><use href="#sobj"/></svg></button></div>
    <div class="group"><button aria-label="硬件加速"><svg><use href="#sok"/></svg></button></div>
    <div class="group pair"><button aria-label="受信任文件"><svg><use href="#spr"/></svg></button><button aria-label="性能提示"><svg><use href="#sgr"/></svg></button></div>
    <div class="group"><button aria-label="全屏显示"><svg><use href="#sfull"/></svg></button><button aria-label="自定义"><svg><use href="#smenu"/></svg></button></div>
  </footer>
  <svg class="pointer" width="28" height="40" viewBox="0 0 28 40"><path d="M2 1V32L9 26L15 38L19 36L14 24H25Z" fill="#fff" stroke="#222"/></svg>
  <div class="watermark"><b>激活 Windows</b><span>转到“设置”以激活 Windows。</span></div>
</div>
</body>
</html>
```
FILE: styles.css
```css
* { box-sizing: border-box; }
html, body { height: 100%; }
body {
  margin: 0;
  background: #050507;
  color: #fff;
  font: 24px/32px "Noto Sans", "Noto Sans CJK SC", sans-serif;
  overflow: hidden;
}
button {
  margin: 0; padding: 0; border: 0; background: none;
  color: inherit; font: inherit; white-space: nowrap;
  display: flex; align-items: center; justify-content: center;
}
a { color: inherit; text-decoration: none; }
svg { display: block; flex: none; fill: none; stroke: currentColor; stroke-width: 2; overflow: visible; }
.defs { position: absolute; width: 0; height: 0; }
.t { fill: currentColor; stroke: none; font-family: "Liberation Sans", sans-serif; }
.tb { font-weight: 700; }
.t14 { font-size: 15px; } .t16 { font-size: 16px; } .t17 { font-size: 17px; } .t18 { font-size: 18px; }
.t20 { font-size: 18px; } .t26 { font-size: 32px; } .t34 { font-size: 36px; } .t48 { font-size: 48px; } .t62 { font-size: 64px; }
.t34, .t48 { stroke: currentColor; stroke-width: 1; }
.dark { fill: #2f5874; } .white { fill: #fff; stroke: #fff; }

.window {
  position: relative;
  display: flex; flex-direction: column;
  height: calc(100vh - 30px);
  margin: 0 7px;
  border: 2px solid #f4f4f4; border-top: 0;
  background: #5c5b5e;
}
.edge {
  flex: none; height: 3px;
  background: linear-gradient(90deg, #666 36%, #fff 36% 55%, #666 55% 88%, #fff 88%);
  border-bottom: 1px solid #333;
}

/* menu bar */
.menubar {
  flex: none; display: flex; align-items: center;
  height: 43px; padding-right: 6px;
  background: linear-gradient(#a9a8aa, #7a787b 60%, #5c5a5d);
  border-bottom: 2px solid #2c2b2d;
}
.logo {
  align-self: flex-start; align-items: flex-start;
  width: 82px; height: 36px; margin-top: -3px; padding-right: 12px;
  background: linear-gradient(#8e8e90, #77777a); border: 2px solid #1e1e20; border-top: 0;
}
.logo svg { width: 48px; height: 14px; stroke: none; overflow: hidden; }
.menus { display: flex; gap: 37px; margin-left: 18px; }
.wincontrols { display: flex; gap: 14px; margin-left: auto; color: #2b2a2c; }
.wincontrols svg { width: 22px; height: 22px; }

/* ribbon tabs */
.rtabs {
  flex: none; display: flex; align-items: flex-end;
  height: 40px; padding-left: 6px;
  background: #545255; border-bottom: 2px solid #2c2b2d; color: #dcdcdc;
}
.rtabs button { height: 36px; padding: 0 20px; }
.rtabs .on {
  height: 36px; margin: 0 3px -2px; padding: 0 16px 2px;
  border: 2px solid #2c2b2d; border-bottom: 0; border-radius: 3px 3px 0 0;
  background: linear-gradient(#7a797b, #5c5c5c); color: #fff;
}
.rtabs .collapse { margin-left: 26px; gap: 11px; }
.pill { width: 26px; height: 16px; stroke: none; }
.tri { width: 10px; height: 10px; }

/* ribbon */
.ribbon {
  flex: none; display: flex; height: 196px; padding-left: 2px;
  background: #5c5c5c; border-bottom: 2px solid #2c2b2d;
}
.panel { display: flex; flex-direction: column; border-right: 2px solid #454446; }
.tools { flex: 1; display: flex; align-items: flex-start; }
.pa .tools { padding: 0 4px 0 5px; }
.pb .tools { padding: 0 4px 0 5px; }
.pc .tools { padding: 0 8px 0 4px; }
.pd .tools { padding: 0 16px 0 4px; }
.pe .tools { padding: 0 6px; }
.pf .tools { padding: 0 12px 0 6px; }
.pg .tools { padding: 0 5px 0 4px; }
.ph { border-right: 0; }
.rest { flex: 1; background: linear-gradient(#5a595b, #3a393b); }
.big { flex-direction: column; justify-content: flex-start; width: 108px; padding-top: 20px; gap: 8px; line-height: 31px; }
.big.narrow { width: 84px; }
.big svg { width: 64px; height: 64px; color: #46a0db; }
.stack { display: flex; flex-direction: column; gap: 4px; padding-top: 18px; }
.stack + .stack { margin-left: 3px; }
.stack button { height: 44px; padding: 0 8px; gap: 10px; justify-content: flex-start; }
.stack svg, .icons svg { width: 32px; height: 32px; color: #46a0db; }
.tools .dim { color: #4b7f9f; }
.tools .mid { color: #4a93c0; }
.stack .hot { padding: 0 6px; border: 2px solid #38373a; background: linear-gradient(#8b8b8c, #6b6b6c); }
.sep { width: 2px; height: 144px; margin: 15px 11px 0; background: #858486; }
.icons { display: grid; gap: 16px 15px; padding: 24px 0 0 8px; }
.five { grid-template-columns: repeat(5, 32px); }
.two { grid-template-columns: repeat(2, 32px); column-gap: 18px; }
.pd .tools { padding-right: 17px; }
.pb .tools { padding-right: 5px; }
.foot { height: 20px; margin-bottom: 2px; background: linear-gradient(#525154, #4a484b); }
.foot svg { width: 16px; height: 14px; }
.foot.end { justify-content: flex-end; padding-right: 6px; }

/* file tabs */
.files {
  flex: none; display: flex; align-items: flex-end;
  height: 55px; padding-left: 44px;
  background: #3a383b; border-top: 2px solid #8b8a8c; border-bottom: 4px solid #5c5b5e;
  color: #bdbcbe;
}
.ftab {
  position: relative; z-index: 0;
  display: flex; align-items: center; justify-content: space-between;
  width: 246px; height: 44px; padding: 3px 25px 0 20px;
}
.ftab.long { width: 462px; }
.ftab.wide { width: 318px; }
.ftab::before, .ftab::after {
  content: ""; position: absolute; z-index: -1; top: 0; bottom: 0;
  background: linear-gradient(#67666a, #565558);
  border-top: 2px solid #717073;
}
.ftab::before { left: 0; right: 50%; transform: skewX(-16deg); border-left: 2px solid #717073; border-radius: 14px 0 0 0; }
.ftab::after { left: 50%; right: 0; margin-left: -20px; transform: skewX(16deg); border-right: 2px solid #717073; border-radius: 0 14px 0 0; }
.ftab.on { z-index: 1; color: #fff; }
.ftab.on::before, .ftab.on::after { background: linear-gradient(#8b8a8d, #626164); }
.ftab svg { width: 16px; height: 16px; color: #403f42; }
.files .add { width: 42px; height: 38px; margin: 0 0 2px 14px; background: #5a595c; border: 2px solid #6b6a6d; border-radius: 4px 20px 0 16px; color: #cfcfcf; }
.files .add svg { width: 18px; height: 18px; }

/* work area */
.work { flex: 1; min-height: 0; display: flex; padding: 3px 0 4px; border-top: 2px solid #0e0e0f; }
.bar {
  flex: none; align-self: flex-start;
  display: flex; flex-direction: column;
  border: 2px solid #39383a;
}
.bar.left { width: 48px; margin-right: 6px; }
.bar.right { width: 50px; margin: 0 3px 0 5px; }
.dots { display: block; height: 16px; background: radial-gradient(circle, #1a1a1a 1px, transparent 2px) 3px 2px / 4px 5px, #4d4c4f; }
.bar button { height: 44px; }
.bar svg { width: 32px; height: 32px; }
.bar.right svg { background: #fff; color: #2a2838; overflow: hidden; }
.canvas { position: relative; flex: 1; overflow: hidden; background: #000; }
.drawing { position: absolute; left: 0; top: 0; stroke-width: 1; }
.green { stroke: #8ad87f; }
.pins { fill: #a34a4a; stroke: #d9b24a; stroke-width: 2; }
.cross { stroke: #e8e8e8; }
.axes { position: absolute; left: 10px; bottom: 4px; stroke: #e8e8e8; stroke-width: 1; }
.axes text { font: 300 36px "Lato", sans-serif; fill: #e8e8e8; stroke: none; text-anchor: middle; }
.compass { position: absolute; right: 26px; top: 24px; display: flex; flex-direction: column; align-items: center; }
.compass text { fill: #b2b1b3; stroke: none; text-anchor: middle; font: 30px "Noto Sans CJK SC", sans-serif; }
.compass .top { fill: #3f3e45; font: 300 50px "Noto Sans CJK SC", sans-serif; }
.wcs {
  width: 94px; height: 34px; margin-top: 32px; padding-bottom: 2px; gap: 12px;
  background: #8a8994; border: 2px solid #77757c; border-radius: 7px;
  color: #3a3a46; font: 20px/24px "Liberation Sans", sans-serif;
}
.wcs svg { width: 16px; height: 12px; color: #b9bac4; }

/* command line */
.command { flex: none; display: flex; padding: 2px 0 2px 2px; background: #777679; }
.gutter {
  flex: none; width: 42px; margin-right: 2px;
  display: flex; flex-direction: column; align-items: center; gap: 20px;
  background: linear-gradient(#77767a, #3f3e41);
}
.gutter .dots { width: 36px; height: 12px; margin: 8px 0 -6px; background: radial-gradient(circle, #b5b5b5 1px, transparent 2px) 0 0 / 6px 6px; }
.gx { width: 18px; height: 18px; }
.wr { width: 28px; height: 28px; color: #dedede; }
.console { flex: 1; display: flex; flex-direction: column; gap: 2px; }
.history { height: 70px; padding: 1px 5px 0; background: #c8c8c8; color: #000; font: 26px/32px "Noto Sans CJK SC", sans-serif; text-spacing-trim: space-all; }
.history p { margin: 0; height: 32px; }
.history span { font: 23px/1px "Liberation Mono", monospace; }
.entry { height: 44px; display: flex; align-items: center; padding: 0 0 4px 10px; gap: 16px; background: #fff; }
.entry button { gap: 7px; color: #777; }
.pr { width: 30px; height: 30px; }
.entry input { flex: 1; height: 40px; padding: 0 0 2px; border: 0; outline: 0; background: none; color: #000; font: italic 26px/32px "Noto Sans CJK SC", sans-serif; }
.entry input::placeholder { color: #999; opacity: 1; }

/* status bar */
.status {
  flex: none; display: flex; align-items: stretch; gap: 1px;
  height: 58px; padding: 2px 1px 4px; background: #3a383b;
}
.layouts { display: flex; align-items: flex-start; margin-right: auto; padding-left: 15px; color: #bdbcbe; }
.layouts button { width: 106px; height: 34px; clip-path: polygon(0 0, 100% 0, 94% 28%, 86% 88%, 82% 100%, 18% 100%, 14% 88%, 6% 28%); background: linear-gradient(#5f5e61, #6b6a6d); }
.layouts .on { width: 108px; margin-right: -8px; background: linear-gradient(#69686b, #8b8a8d); color: #fff; font-weight: 700; }
.layouts .add { width: 46px; margin-left: 10px; clip-path: none; border: 2px solid #6b6a6d; border-radius: 16px 0 20px 4px; background: #5a595c; }
.layouts .add svg { width: 16px; height: 16px; color: #d8d8d8; }
.group { display: flex; align-items: center; border: 2px solid #79787b; background: #525154; color: #c9c9c9; }
.group button { width: 48px; height: 44px; }
.group button:only-child { width: 50px; }
.group .model:only-child { width: 58px; color: #fff; }
.pair { padding-right: 6px; }
.group svg { width: 32px; height: 32px; }
.group .arr { width: 30px; color: #fff; }
.group .line { border-right: 2px solid #79787b; }
.group .arr svg, .ratio svg { width: 14px; height: 14px; }
.group .ratio { width: 66px; gap: 7px; color: #fff; }

/* overlays */
.pointer { position: absolute; left: 900px; top: 166px; }
.watermark { position: absolute; right: 120px; bottom: 0; width: 380px; color: rgba(155, 155, 155, 0.8); pointer-events: none; }
.watermark b, .watermark span { display: block; white-space: nowrap; font-weight: 400; }
.watermark b { font-size: 40px; line-height: 50px; }
.watermark span { font-size: 29px; line-height: 36px; }
```
